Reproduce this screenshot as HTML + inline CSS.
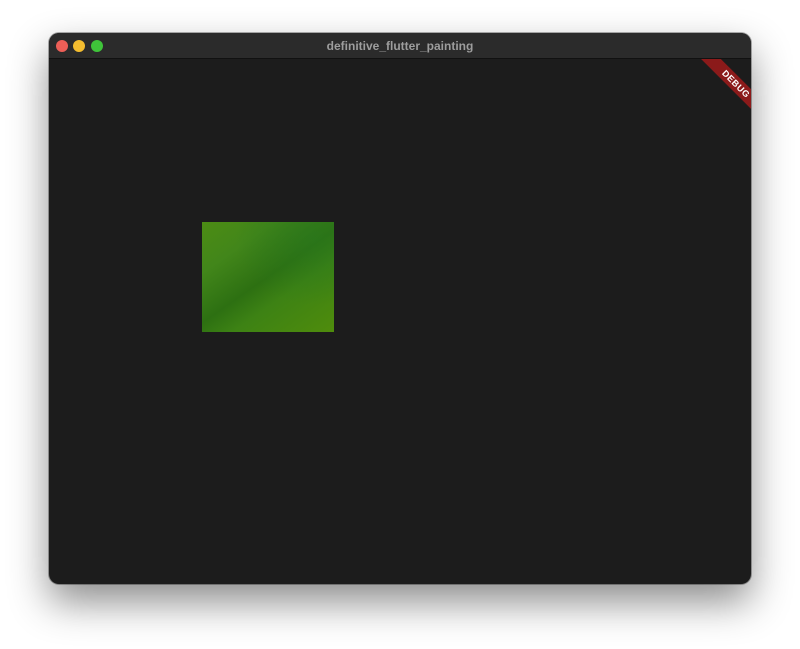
<!DOCTYPE html>
<html><head><meta charset="utf-8"><style>
html,body{margin:0;padding:0;width:800px;height:649px;background:#fff;overflow:hidden;font-family:"Liberation Sans",sans-serif}
.win{position:absolute;left:49px;top:33px;width:702px;height:551px;background:#1c1c1c;border-radius:10px;overflow:hidden;box-shadow:0 18px 40px rgba(0,0,0,.45),0 0 0 1px rgba(0,0,0,.3)}
.tb{position:absolute;z-index:2;left:0;top:0;width:702px;height:25px;background:#2b2b2b;border-bottom:1px solid #111}
.d{position:absolute;top:7px;width:12px;height:12px;border-radius:50%}
.title{position:absolute;left:0;right:0;top:6px;text-align:center;color:#9d9d9d;font-size:12px;font-weight:bold}
.g{position:absolute;left:153px;top:189px;width:132px;height:110px;
background:linear-gradient(145deg,#4c8c14 0%,#42861a 25%,#2d7012 50%,#3d8214 65%,#4f8c0c 100%);}
.g2{position:absolute;left:153px;top:189px;width:132px;height:110px;background:radial-gradient(ellipse at 85% 15%,rgba(40,120,30,.6),transparent 50%)}
.bn{position:absolute;z-index:1;left:637px;top:44px;width:100px;height:14px;background:#8b1a1a;transform:rotate(45deg);color:#fff;font-size:9px;font-weight:bold;text-align:center;line-height:14px;letter-spacing:.5px}
</style></head><body>
<div class="win">
<div class="tb">
<div class="d" style="left:7px;background:#ed5f57"></div>
<div class="d" style="left:24px;background:#f4bd2f"></div>
<div class="d" style="left:42px;background:#3fc43a"></div>
<div class="title">definitive_flutter_painting</div>
</div>
<div class="g"></div><div class="g2"></div>
<div class="bn">DEBUG</div>
</div>
</body></html>
